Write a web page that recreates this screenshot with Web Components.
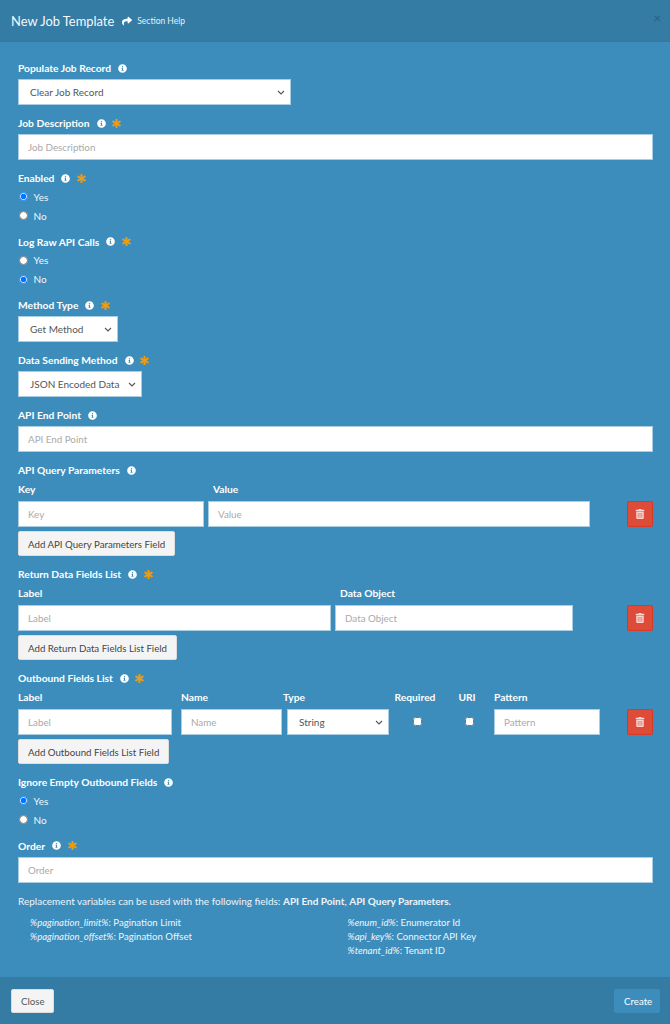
<!DOCTYPE html>
<html lang="en"><head><meta charset="utf-8"><title>New Job Template</title>
<style>
html,body{margin:0;padding:0;height:100%;overflow:hidden}
body{font-family:Lato,"Open Sans",sans-serif;font-size:10.5px;color:#fff;background:#3c8dbc}
</style></head><body>
<job-modal>
  <span slot="title">New Job Template</span>
  <form-field label="Populate Job Record"><select-field width="273" value="Clear Job Record"></select-field></form-field>
  <form-field label="Job Description" required><text-field placeholder="Job Description"></text-field></form-field>
  <form-field label="Enabled" required radios><radio-option checked name="en">Yes</radio-option><radio-option name="en">No</radio-option></form-field>
  <form-field label="Log Raw API Calls" required radios><radio-option name="log">Yes</radio-option><radio-option checked name="log">No</radio-option></form-field>
  <form-field label="Method Type" required><select-field width="100" value="Get Method"></select-field></form-field>
  <form-field label="Data Sending Method" required><select-field width="124" value="JSON Encoded Data"></select-field></form-field>
  <form-field label="API End Point"><text-field placeholder="API End Point"></text-field></form-field>
  <form-field label="API Query Parameters">
    <list-row>
      <list-cell label="Key" style="width:186px"><text-field placeholder="Key"></text-field></list-cell>
      <list-cell label="Value" style="width:382px;margin-left:4px;--lx:5px"><text-field placeholder="Value"></text-field></list-cell>
    </list-row>
    <add-button>Add API Query Parameters Field</add-button>
  </form-field>
  <form-field label="Return Data Fields List" required>
    <list-row>
      <list-cell label="Label" style="width:313px"><text-field placeholder="Label"></text-field></list-cell>
      <list-cell label="Data Object" style="width:238px;margin-left:4px;--lx:5px"><text-field placeholder="Data Object"></text-field></list-cell>
    </list-row>
    <add-button>Add Return Data Fields List Field</add-button>
  </form-field>
  <form-field label="Outbound Fields List" required>
    <list-row>
      <list-cell label="Label" style="width:154px"><text-field placeholder="Label"></text-field></list-cell>
      <list-cell label="Name" style="width:101px;margin-left:9px"><text-field placeholder="Name"></text-field></list-cell>
      <list-cell label="Type" style="width:102px;margin-left:5px;--lx:-4px"><select-field width="102" value="String"></select-field></list-cell>
      <list-cell label="Required" center style="width:46px;margin-left:5px;--lx:-2px"><check-box></check-box></list-cell>
      <list-cell label="URI" center style="width:20px;margin-left:19px;--lx:-2px"><check-box></check-box></list-cell>
      <list-cell label="Pattern" style="width:106px;margin-left:15px"><text-field placeholder="Pattern"></text-field></list-cell>
    </list-row>
    <add-button>Add Outbound Fields List Field</add-button>
  </form-field>
  <form-field label="Ignore Empty Outbound Fields" radios><radio-option checked name="ig">Yes</radio-option><radio-option name="ig">No</radio-option></form-field>
  <form-field label="Order" required><text-field placeholder="Order"></text-field></form-field>
  <variable-notes>
    <span slot="intro">Replacement variables can be used with the following fields: <b>API End Point</b>, <b>API Query Parameters.</b></span>
    <div slot="left"><i>%pagination_limit%</i>: Pagination Limit</div>
    <div slot="left"><i>%pagination_offset%</i>: Pagination Offset</div>
    <div slot="right"><i>%enum_id%</i>: Enumerator Id</div>
    <div slot="right"><i>%api_key%</i>: Connector API Key</div>
    <div slot="right"><i>%tenant_id%</i>: Tenant ID</div>
  </variable-notes>
</job-modal>
<script>
const ICON={
info:['0 0 512 512','M256 8C119.043 8 8 119.083 8 256c0 136.997 111.043 248 248 248s248-111.003 248-248C504 119.083 392.957 8 256 8zm0 110c23.196 0 42 18.804 42 42s-18.804 42-42 42-42-18.804-42-42 18.804-42 42-42zm56 254c0 6.627-5.373 12-12 12h-88c-6.627 0-12-5.373-12-12v-24c0-6.627 5.373-12 12-12h12v-64h-12c-6.627 0-12-5.373-12-12v-24c0-6.627 5.373-12 12-12h64c6.627 0 12 5.373 12 12v100h12c6.627 0 12 5.373 12 12v24z'],
star:['0 0 512 512','M478.21 334.093L336 256l142.21-78.093c11.795-6.477 15.961-21.384 9.232-33.037l-19.48-33.741c-6.728-11.653-21.72-15.499-33.227-8.523L296 186.718l3.475-162.204C299.763 11.061 288.937 0 275.48 0h-38.96c-13.456 0-24.283 11.061-23.994 24.514L216 186.718 77.265 102.607c-11.506-6.976-26.499-3.13-33.227 8.523l-19.48 33.741c-6.728 11.653-2.562 26.56 9.233 33.037L176 256 33.79 334.093c-11.795 6.477-15.961 21.384-9.232 33.037l19.48 33.741c6.728 11.653 21.721 15.499 33.227 8.523L216 325.282l-3.475 162.204C212.237 500.939 223.064 512 236.52 512h38.961c13.456 0 24.283-11.061 23.995-24.514L296 325.282l138.735 84.111c11.506 6.976 26.499 3.13 33.227-8.523l19.48-33.741c6.728-11.653 2.563-26.559-9.232-33.036z'],
share:['0 0 512 512','M503.691 189.836L327.687 37.851C312.281 24.546 288 35.347 288 56.015v80.053C127.371 137.907 0 170.1 0 322.326c0 61.441 39.581 122.309 83.333 154.132 13.653 9.931 33.111-2.533 28.077-18.631C66.066 312.814 132.917 274.316 288 272.085V360c0 20.7 24.3 31.453 39.687 18.164l176.004-152c11.071-9.562 11.086-26.753 0-36.328z'],
trash:['0 0 448 512','M32 464a48 48 0 0 0 48 48h288a48 48 0 0 0 48-48V128H32zm272-256a16 16 0 0 1 32 0v224a16 16 0 0 1-32 0zm-96 0a16 16 0 0 1 32 0v224a16 16 0 0 1-32 0zm-96 0a16 16 0 0 1 32 0v224a16 16 0 0 1-32 0zM432 32H312l-9.4-18.7A24 24 0 0 0 281.1 0H166.8a23.72 23.72 0 0 0-21.4 13.3L136 32H16A16 16 0 0 0 0 48v32a16 16 0 0 0 16 16h416a16 16 0 0 0 16-16V48a16 16 0 0 0-16-16z']
};
const svg=(n,s,c,extra='')=>`<svg width="${s}" height="${s}" viewBox="${ICON[n][0]}" fill="${c}" aria-hidden="true" ${extra}><path d="${ICON[n][1]}"/></svg>`;
const FONT='font-family:Lato,"Open Sans",sans-serif';
function def(name,html){
  customElements.define(name,class extends HTMLElement{
    connectedCallback(){
      if(this.shadowRoot)return;
      this.attachShadow({mode:'open'}).innerHTML=typeof html==='function'?html(this):html;
    }
  });
}
def('job-modal',`<style>
:host{display:flex;flex-direction:column;height:100vh;${FONT}}
header{flex:none;height:42px;box-sizing:border-box;background:#357ca5;display:flex;align-items:center;padding:0 10px 0 11px;border-bottom:1px solid #3478a0}
h1{margin:0;font-size:12.9px;font-weight:400;color:#f4f8fb}
.help{display:flex;align-items:center;gap:5px;margin-left:8px;font-size:8.5px;color:#e6eff5;padding-top:1px}
.x{margin-left:auto;color:#2d6788;font-size:13px;font-weight:700;line-height:1;padding-bottom:5px;margin-right:-1px}
main{flex:1;min-height:0;padding:17px 17px 0 18px}
footer{flex:none;height:47px;box-sizing:border-box;background:#357ca5;display:flex;justify-content:space-between;align-items:center;padding:1px 10px 0 11px}
button{${FONT};font-size:9.7px;height:24px;border-radius:2px;box-sizing:border-box;padding:0 9px}
.close{width:43px;background:#f4f4f4;border:1px solid #ddd;color:#555}
.create{width:46px;background:#3c8dbc;border:1px solid #3c8dbc;color:#fff}
</style>
<header><h1><slot name="title"></slot></h1><span class="help">${svg('share',10,'#fff')}<span>Section Help</span></span><span class="x">×</span></header>
<main><slot></slot></main>
<footer><button class="close">Close</button><button class="create">Create</button></footer>`);
def('form-field',h=>`<style>
:host{display:block;margin-bottom:9px}
:host([radios]){margin-bottom:7.5px}
.l{display:flex;align-items:center;height:18px;margin-bottom:2px;font-weight:700;font-size:10.25px;color:#fff;white-space:nowrap}
:host([radios]) .l{margin-bottom:.5px}
.i{margin-left:7px;display:flex}.s{margin-left:6.5px;display:flex}
</style><div class="l"><span>${h.getAttribute('label')}</span><span class="i">${svg('info',9,'#fff')}</span>${h.hasAttribute('required')?`<span class="s">${svg('star',9,'#f39c12','stroke="#f39c12" stroke-width="30"')}</span>`:''}</div><slot></slot>`);
def('text-field',h=>`<style>
:host{display:block}
input{display:block;box-sizing:border-box;width:100%;height:26px;border:1px solid #a9cde2;background:#fff;padding:0 9px;margin:0;${FONT};font-size:9.8px;color:#555;border-radius:0;outline:0}
input::placeholder{color:#aaa;opacity:1}
</style><input type="text" placeholder="${h.getAttribute('placeholder')}">`);
def('select-field',h=>`<style>
:host{display:block;position:relative;width:${h.getAttribute('width')}px}
select{display:block;appearance:none;-webkit-appearance:none;box-sizing:border-box;width:100%;height:26px;border:1px solid #a9cde2;background:#fff;padding:0 20px 0 11px;margin:0;${FONT};font-size:10px;color:#555;border-radius:0;outline:0}
svg{position:absolute;right:6px;top:11px}
</style><select><option>${h.getAttribute('value')}</option></select><svg width="8" height="5" viewBox="0 0 8 5" fill="none" stroke="#555" stroke-width="1.1"><path d="M1 1l3 3 3-3"/></svg>`);
def('radio-option',h=>`<style>
:host{display:flex;align-items:center;height:18.75px;font-size:10px;color:#f2f7fb}
input{width:9px;height:9px;margin:0 5.5px 0 1px;flex:none}
</style><input type="radio" name="${h.getAttribute('name')}" ${h.hasAttribute('checked')?'checked':''}><slot></slot>`);
def('check-box',`<style>
:host{display:flex;justify-content:center;align-items:center;height:26px;padding-bottom:2px;box-sizing:border-box}
input{width:9px;height:9px;margin:0}
</style><input type="checkbox">`);
def('list-row',`<style>
:host{display:flex;align-items:flex-end;margin-bottom:4px}
.d{margin-left:auto;width:26px;height:26px;flex:none;box-sizing:border-box;background:#dd4b39;border:1px solid #d73925;border-radius:2px;display:flex;align-items:center;justify-content:center}
</style><slot></slot><div class="d">${svg('trash',10,'#f9d6d0')}</div>`);
def('list-cell',h=>`<style>
:host{display:block;flex:none}
.c{height:16px;margin-bottom:4px;display:flex;align-items:center;font-weight:700;font-size:10.25px;white-space:nowrap;transform:translateX(var(--lx,0))}
:host([center]) .c{justify-content:center}
</style><div class="c">${h.getAttribute('label')}</div><slot></slot>`);
def('add-button',`<style>
:host{display:block}
button{display:block;height:25px;box-sizing:border-box;padding:0 9px;background:#f4f4f4;border:1px solid #ddd;border-radius:2px;${FONT};font-size:9.7px;color:#444;white-space:nowrap}
</style><button><slot></slot></button>`);
def('variable-notes',`<style>
:host{display:block;font-size:10px;color:#eef5fa;padding-top:1px}
.intro{height:16px;display:flex;align-items:center;white-space:pre-wrap}
.g{display:grid;grid-template-columns:1fr 1fr;margin-top:7.5px;line-height:14px;font-size:9.6px}
.g>div{padding-left:12px}
</style><div class="intro"><span><slot name="intro"></slot></span></div><div class="g"><div><slot name="left"></slot></div><div><slot name="right"></slot></div></div>`);
</script>
</body></html>
